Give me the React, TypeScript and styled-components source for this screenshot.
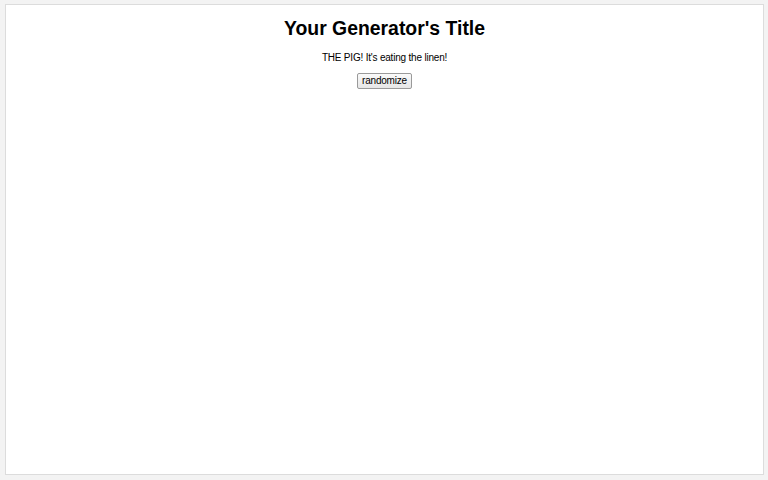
import { useState } from 'react'
import styled, { createGlobalStyle } from 'styled-components'

const GlobalStyle = createGlobalStyle`
  html, body {
    margin: 0;
    padding: 0;
    background: #f3f3f3;
    font-family: "Liberation Sans", Arial, sans-serif;
  }
`

const Page = styled.div`
  padding: 4px 4px 5px 5px;
  height: 480px;
  box-sizing: border-box;
`

const Panel = styled.div`
  height: 100%;
  box-sizing: border-box;
  background: #ffffff;
  border: 1px solid #dcdcdc;
  display: flex;
  flex-direction: column;
  align-items: center;
  padding-top: 12px;
`

const Title = styled.h1`
  margin: 0;
  font-size: 19.4px;
  font-weight: bold;
  color: #000;
  line-height: 22px;
`

const Output = styled.p`
  margin: 13px 0 0;
  font-size: 10px;
  line-height: 12px;
  color: #000;
  letter-spacing: -0.2px;
`

const RandomButton = styled.button`
  margin-top: 9px;
  font-family: "Liberation Sans", Arial, sans-serif;
  font-size: 10px;
  line-height: 12px;
  padding: 1px 4px;
  color: #000;
  background: linear-gradient(#fafafa, #e6e6e6);
  border: 1px solid #9a9a9a;
  border-radius: 2px;
  letter-spacing: -0.2px;
`

const lines = [
  "THE PIG! It's eating the linen!",
  'The goat has found the laundry.',
  'A duck is wearing your socks.',
]

export default function App() {
  const [idx, setIdx] = useState(0)
  return (
    <>
      <GlobalStyle />
      <Page>
        <Panel>
          <Title>Your Generator's Title</Title>
          <Output>{lines[idx]}</Output>
          <RandomButton onClick={() => setIdx(Math.floor(Math.random() * lines.length))}>
            randomize
          </RandomButton>
        </Panel>
      </Page>
    </>
  )
}
